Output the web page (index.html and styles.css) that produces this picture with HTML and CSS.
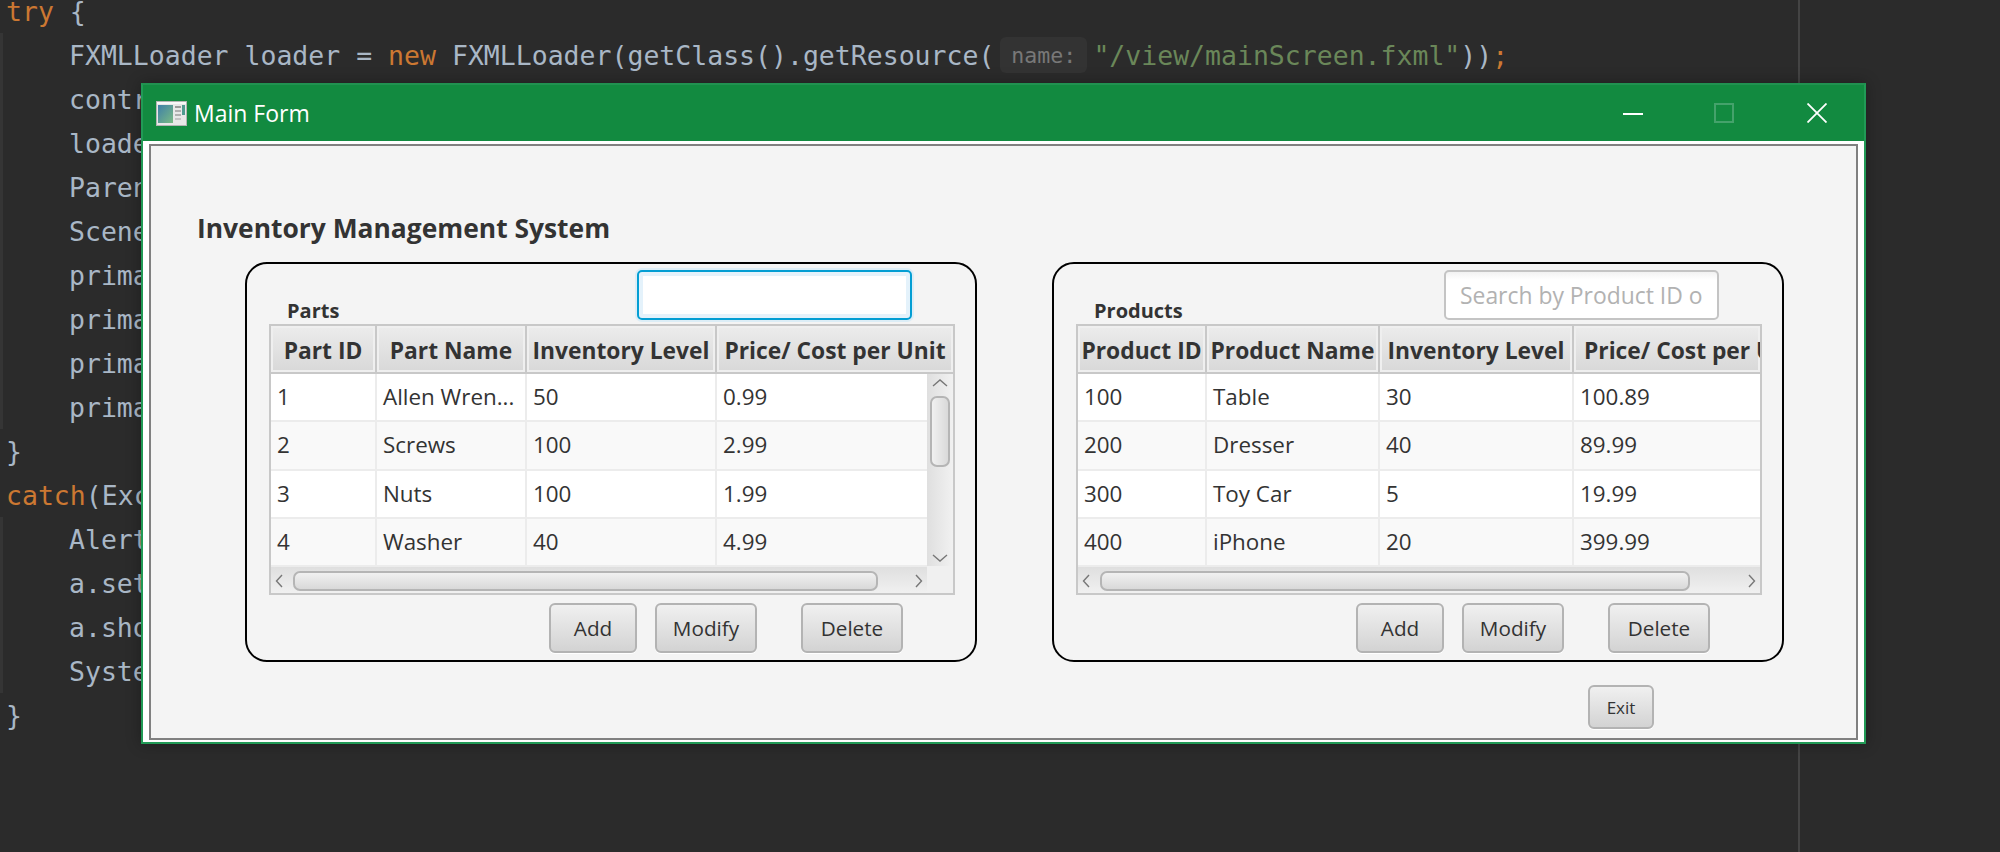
FILE: index.html
```html
<!DOCTYPE html>
<html lang="en">
<head>
<meta charset="utf-8">
<title>Main Form</title>
<link rel="stylesheet" href="styles.css">
</head>
<body>
<div class="editor">
  <div class="margin-guide"></div>
  <div class="code">
    <div class="line top"><span class="kw">try</span> {</div>
    <div class="block">
      <div class="line">FXMLLoader loader = <span class="kw">new</span> FXMLLoader(getClass().getResource(<span class="hint">name:</span><span class="str">"/view/mainScreen.fxml"</span>))<span class="kw">;</span></div>
      <div class="line">contr</div>
      <div class="line">loade</div>
      <div class="line">Paren</div>
      <div class="line">Scene</div>
      <div class="line">prima</div>
      <div class="line">prima</div>
      <div class="line">prima</div>
      <div class="line">prima</div>
    </div>
    <div class="line top">}</div>
    <div class="line top"><span class="kw">catch</span>(Exc</div>
    <div class="block">
      <div class="line">Alert</div>
      <div class="line">a.set</div>
      <div class="line">a.sho</div>
      <div class="line">Syste</div>
    </div>
    <div class="line top">}</div>
  </div>

  <div class="window">
    <div class="titlebar">
      <svg class="app-icon" viewBox="0 0 31 25" width="31" height="25">
        <defs>
          <linearGradient id="paneFill" x1="0" y1="0" x2="1" y2="1">
            <stop offset="0" stop-color="#3f7fa8"/>
            <stop offset="1" stop-color="#79bb84"/>
          </linearGradient>
        </defs>
        <rect x="0.5" y="0.5" width="30" height="24" fill="#e8e8e8" stroke="#b4b4b4"/>
        <rect x="1" y="1" width="29" height="2" fill="#f8f8f8"/>
        <rect x="2" y="4" width="15" height="18" fill="url(#paneFill)"/>
        <rect x="19" y="5" width="6" height="2" fill="#9a9a9a"/>
        <rect x="19" y="9" width="6" height="2" fill="#b0b0b0"/>
        <rect x="19" y="13" width="6" height="2" fill="#b0b0b0"/>
        <rect x="19" y="17" width="6" height="2" fill="#c4c4c4"/>
        <rect x="26" y="4" width="3" height="10" fill="#4f9a90"/>
      </svg>
      <span class="title">Main Form</span>
      <div class="controls">
        <svg class="ctl" viewBox="0 0 20 20" width="20" height="20"><rect x="0" y="10" width="20" height="2" fill="#fff"/></svg>
        <svg class="ctl ctl-max" viewBox="0 0 20 20" width="20" height="20"><rect x="1" y="1" width="18" height="18" fill="none" stroke="#44a26b" stroke-width="2"/></svg>
        <svg class="ctl ctl-close" viewBox="0 0 20 20" width="20" height="20"><path d="M0.5 0.5 19.5 19.5M19.5 0.5 0.5 19.5" fill="none" stroke="#fff" stroke-width="1.8"/></svg>
      </div>
    </div>
    <div class="client">
      <div class="stage">
        <h1 class="heading">Inventory Management System</h1>
        <div class="panels">

          <section class="panel">
            <div class="panel-top">
              <span class="panel-label">Parts</span>
              <input class="search search-focus" type="text" aria-label="Search parts">
            </div>
            <div class="table">
              <div class="thead cols-parts">
                <div class="th">Part ID</div>
                <div class="th">Part Name</div>
                <div class="th">Inventory Level</div>
                <div class="th">Price/ Cost per Unit</div>
              </div>
              <div class="tbody-wrap">
                <div class="tbody">
                  <div class="tr cols-parts-body"><div class="td">1</div><div class="td">Allen Wren...</div><div class="td">50</div><div class="td">0.99</div></div>
                  <div class="tr cols-parts-body"><div class="td">2</div><div class="td">Screws</div><div class="td">100</div><div class="td">2.99</div></div>
                  <div class="tr cols-parts-body"><div class="td">3</div><div class="td">Nuts</div><div class="td">100</div><div class="td">1.99</div></div>
                  <div class="tr cols-parts-body"><div class="td">4</div><div class="td">Washer</div><div class="td">40</div><div class="td">4.99</div></div>
                  <div class="hscroll">
                    <svg class="arrow-h" viewBox="0 0 8 14" width="8" height="14"><path d="M7 1 1.5 7 7 13" fill="none" stroke="#777" stroke-width="1.4"/></svg>
                    <div class="thumb-h thumb-parts"></div>
                    <svg class="arrow-h arrow-end" viewBox="0 0 8 14" width="8" height="14"><path d="M1 1 6.5 7 1 13" fill="none" stroke="#777" stroke-width="1.4"/></svg>
                  </div>
                </div>
                <div class="vscroll">
                  <svg class="arrow-v" viewBox="0 0 16 8" width="16" height="8"><path d="M1 7 8 1 15 7" fill="none" stroke="#777" stroke-width="1.4"/></svg>
                  <div class="thumb-v"></div>
                  <svg class="arrow-v arrow-down" viewBox="0 0 16 8" width="16" height="8"><path d="M1 1 8 7 15 1" fill="none" stroke="#777" stroke-width="1.4"/></svg>
                </div>
              </div>
            </div>
            <div class="actions actions-parts">
              <button class="btn btn-add" type="button">Add</button>
              <button class="btn btn-modify" type="button">Modify</button>
              <button class="btn btn-delete" type="button">Delete</button>
            </div>
          </section>

          <section class="panel">
            <div class="panel-top">
              <span class="panel-label">Products</span>
              <input class="search" type="text" placeholder="Search by Product ID or Name" aria-label="Search products">
            </div>
            <div class="table">
              <div class="thead cols-products">
                <div class="th">Product ID</div>
                <div class="th">Product Name</div>
                <div class="th">Inventory Level</div>
                <div class="th th-clip">Price/ Cost per Unit</div>
              </div>
              <div class="tbody-wrap">
                <div class="tbody">
                  <div class="tr cols-products"><div class="td">100</div><div class="td">Table</div><div class="td">30</div><div class="td">100.89</div></div>
                  <div class="tr cols-products"><div class="td">200</div><div class="td">Dresser</div><div class="td">40</div><div class="td">89.99</div></div>
                  <div class="tr cols-products"><div class="td">300</div><div class="td">Toy Car</div><div class="td">5</div><div class="td">19.99</div></div>
                  <div class="tr cols-products"><div class="td">400</div><div class="td">iPhone</div><div class="td">20</div><div class="td">399.99</div></div>
                  <div class="hscroll">
                    <svg class="arrow-h" viewBox="0 0 8 14" width="8" height="14"><path d="M7 1 1.5 7 7 13" fill="none" stroke="#777" stroke-width="1.4"/></svg>
                    <div class="thumb-h thumb-products"></div>
                    <svg class="arrow-h arrow-end" viewBox="0 0 8 14" width="8" height="14"><path d="M1 1 6.5 7 1 13" fill="none" stroke="#777" stroke-width="1.4"/></svg>
                  </div>
                </div>
              </div>
            </div>
            <div class="actions actions-products">
              <button class="btn btn-add" type="button">Add</button>
              <button class="btn btn-modify" type="button">Modify</button>
              <button class="btn btn-delete" type="button">Delete</button>
            </div>
          </section>

        </div>
        <div class="exit-row">
          <button class="btn btn-exit" type="button">Exit</button>
        </div>
      </div>
    </div>
  </div>
</div>
</body>
</html>
```

FILE: styles.css
```css
* { box-sizing: border-box; }

html, body {
  margin: 0;
  height: 100%;
}

body {
  overflow: hidden;
  background: #2b2b2b;
}

.editor {
  position: relative;
  width: 2000px;
  height: 852px;
  overflow: hidden;
  background: #2b2b2b;
}

.margin-guide {
  position: absolute;
  left: 1798px;
  top: 0;
  width: 2px;
  height: 852px;
  background: #444;
}

.code {
  margin-top: -11px;
  font-family: "DejaVu Sans Mono", "Liberation Mono", monospace;
  font-size: 26.5px;
  color: #a9b7c6;
}

.line {
  display: flex;
  align-items: center;
  height: 44px;
  white-space: pre;
}

.line.top { padding-left: 6px; }

.block {
  border-left: 3px solid #353535;
  padding-left: 66px;
}

.kw { color: #cc7832; }
.str { color: #6a8759; margin-left: 6px; }

.hint {
  display: inline-flex;
  align-items: center;
  justify-content: center;
  width: 87px;
  height: 36px;
  margin-left: 6px;
  border-radius: 6px;
  background: #333;
  color: #787878;
  font-size: 21.6px;
}

.window {
  position: absolute;
  left: 141px;
  top: 83px;
  width: 1725px;
  height: 661px;
  display: flex;
  flex-direction: column;
  border: 2px solid #219a56;
  border-top-color: #219150;
  background: #fff;
  box-shadow: 0 0 14px rgba(0, 0, 0, .3);
  font-family: "Open Sans", "Liberation Sans", sans-serif;
  color: #333;
}

.titlebar {
  display: flex;
  align-items: center;
  flex: none;
  height: 56px;
  padding: 0 37px 0 13px;
  background: #128a40;
}

.app-icon { flex: none; }

.title {
  margin-left: 7px;
  font-size: 23px;
  color: #fff;
}

.controls {
  display: flex;
  align-items: center;
  margin-left: auto;
}

.ctl-max { margin-left: 71px; }
.ctl-close { margin-left: 73px; }

.client {
  flex: 1;
  display: flex;
  padding: 3px 6px 2px 6px;
  background: #fff;
}

.stage {
  flex: 1;
  border: 2px solid #808080;
  background: #f4f4f4;
}

.heading {
  margin: 64px 0 0 46px;
  height: 36px;
  line-height: 36px;
  font-size: 26.4px;
  font-weight: 700;
  color: #333;
}

.panels {
  display: flex;
  gap: 75px;
  margin: 16px 0 0 94px;
}

.panel {
  width: 732px;
  height: 400px;
  border: 2px solid #000;
  border-radius: 22px;
  padding: 0 0 0 22px;
}

.panel-top {
  display: flex;
  align-items: flex-end;
  height: 60px;
  padding-left: 18px;
}

.panel-label {
  width: 350px;
  height: 26px;
  line-height: 26px;
  font-size: 20px;
  font-weight: 700;
  color: #333;
}

.search {
  align-self: flex-start;
  width: 275px;
  height: 50px;
  margin-top: 6px;
  padding: 0 14px;
  border: 2px solid #c4c4c4;
  border-radius: 5px;
  outline: none;
  background: linear-gradient(#f2f2f2, #fff 8px);
  font-family: "Open Sans", "Liberation Sans", sans-serif;
  font-size: 22.9px;
  color: #333;
}

.search::placeholder { color: #b2b2b2; opacity: 1; }

.search-focus {
  border: 2px solid #039ed3;
  background: #fff;
  box-shadow: 0 0 0 2px #dcedf6, inset 0 0 0 4px #e4f2fb;
}

.table {
  width: 686px;
  height: 271px;
  border: 2px solid #c8c8c8;
  overflow: hidden;
  background: #f0f0f0;
}

.thead {
  display: grid;
  height: 48px;
  border-bottom: 2px solid #c8c8c8;
}

.cols-parts { grid-template-columns: 106px 150px 190px 236px; }
.cols-parts-body { grid-template-columns: 106px 150px 190px 210px; }
.cols-products { grid-template-columns: 129px 173px 194px 186px; }

.th {
  display: flex;
  align-items: center;
  justify-content: center;
  overflow: hidden;
  padding-top: 3px;
  border-right: 2px solid #c8c8c8;
  background: linear-gradient(#ececec, #d8d8d8);
  box-shadow: inset 0 0 0 2px #efefef;
  font-size: 22.8px;
  font-weight: 700;
  white-space: nowrap;
  color: #333;
}

.th:last-child { border-right: 0; }

.th-clip {
  justify-content: flex-start;
  padding-left: 10px;
}

.tbody-wrap {
  display: flex;
}

.tbody { flex: 1; min-width: 0; }

.tr {
  display: grid;
  height: 48.33px;
  border-bottom: 2px solid #ececec;
  background: #fff;
}

.tr:nth-child(even) { background: #f9f9f9; }

.td {
  display: flex;
  align-items: center;
  padding: 0 0 1px 6px;
  border-right: 2px solid #ececec;
  font-size: 22.4px;
  white-space: nowrap;
  overflow: hidden;
  color: #333;
}

.td:last-child { border-right: 0; }

.hscroll {
  display: flex;
  align-items: center;
  height: 27px;
  padding: 0 4px;
  background: linear-gradient(#dfdfdf, #f1f1f1);
}

.arrow-h { flex: none; }
.arrow-end { margin-left: auto; }

.thumb-h {
  flex: none;
  height: 20px;
  margin-left: 10px;
  border: 2px solid #b5b5b5;
  border-radius: 7px;
  background: linear-gradient(#f1f1f1, #d9d9d9);
}

.thumb-parts { width: 585px; }
.thumb-products { width: 590px; }

.vscroll {
  flex: none;
  display: flex;
  flex-direction: column;
  align-items: center;
  width: 26px;
  height: 192px;
  padding-top: 5px;
  background: linear-gradient(90deg, #dfdfdf, #f1f1f1);
}

.arrow-v { flex: none; }
.arrow-down { margin-top: auto; margin-bottom: 4px; }

.thumb-v {
  width: 20px;
  height: 71px;
  margin-top: 9px;
  border: 2px solid #b5b5b5;
  border-radius: 7px;
  background: linear-gradient(90deg, #f1f1f1, #d9d9d9);
}

.actions {
  display: flex;
  margin-top: 8px;
}

.actions-parts { padding-left: 280px; }
.actions-products { padding-left: 280px; }

.btn {
  display: block;
  height: 50px;
  padding: 0;
  border: 2px solid #b3b3b3;
  border-radius: 6px;
  background: linear-gradient(#f0f0f0, #d3d3d3);
  box-shadow: 0 1px 0 #fff;
  font-family: "Open Sans", "Liberation Sans", sans-serif;
  font-size: 20.7px;
  color: #333;
}

.btn-add { width: 88px; }
.btn-modify { width: 102px; margin-left: 18px; }
.btn-delete { width: 102px; margin-left: 44px; }

.exit-row {
  display: flex;
  justify-content: flex-end;
  margin-top: 23px;
  padding-right: 202px;
}

.btn-exit {
  width: 66px;
  height: 44px;
  font-size: 17px;
}
```
